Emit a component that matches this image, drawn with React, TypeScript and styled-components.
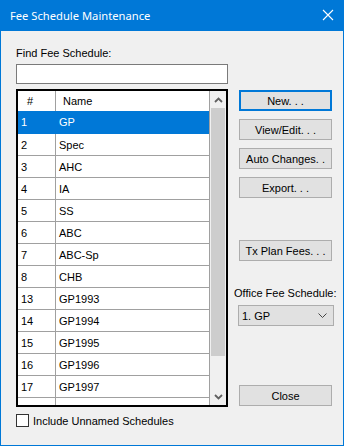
import React from "react";
import styled, { createGlobalStyle } from "styled-components";

const Global = createGlobalStyle`
  html, body { margin: 0; padding: 0; background: #f0f0f0; }
  body { font-family: "Liberation Sans", Arial, sans-serif; font-size: 11px; color: #000; }
  * { box-sizing: border-box; }
`;

const Window = styled.div`
  width: 344px;
  height: 446px;
  display: flex;
  flex-direction: column;
  border: 1px solid #0078d7;
  border-top: none;
  background: #f0f0f0;
  overflow: hidden;
`;

const TitleBar = styled.div`
  height: 31px;
  margin: 0 -1px;
  background: #0078d7;
  color: #fff;
  display: flex;
  align-items: center;
  justify-content: space-between;
  padding: 0 10px 1px 10px;
  font-family: "Noto Sans", "Open Sans", sans-serif;
  font-size: 11.2px;
`;

const CloseX = styled.svg`
  width: 12px;
  height: 12px;
`;

const Body = styled.div`
  flex: 1;
  display: flex;
  padding: 16px 0 0 15px;
`;

const LeftCol = styled.div`
  width: 212px;
  display: flex;
  flex-direction: column;
`;

const Label = styled.div`
  height: 13px;
  line-height: 13px;
  white-space: nowrap;
`;

const TextBox = styled.div`
  margin-top: 4px;
  height: 20px;
  background: #fff;
  border: 1px solid #7a7a7a;
`;

const ListBox = styled.div`
  margin-top: 5px;
  height: 318px;
  border: 2px solid #000;
  background: #fff;
  display: flex;
  overflow: hidden;
`;

const GridArea = styled.div`
  width: 192px;
  overflow: hidden;
  border-right: 1px solid #a0a0a0;
`;

const Row = styled.div<{ $selected?: boolean; $header?: boolean }>`
  display: grid;
  grid-template-columns: 38px 1fr;
  height: ${(p) => (p.$header ? 21 : 22)}px;
  background: ${(p) => (p.$selected ? "#0078d7" : "#fff")};
  color: ${(p) => (p.$selected ? "#fff" : "#000")};
  border-bottom: 1px solid ${(p) => (p.$selected ? "#0078d7" : "#a0a0a0")};
  ${(p) => (p.$selected ? "margin-top: -1px; height: 23px;" : "")}
`;

const Cell = styled.div<{ $selected?: boolean; $pad: number }>`
  display: flex;
  align-items: center;
  padding-left: ${(p) => p.$pad}px;
  white-space: nowrap;
  overflow: hidden;
  border-right: 1px solid ${(p) => (p.$selected ? "#0078d7" : "#a0a0a0")};
  &:last-child { border-right: none; }
`;

const ScrollBar = styled.div`
  width: 16px;
  display: flex;
  flex-direction: column;
  background: #f0f0f0;
`;

const ArrowBtn = styled.div`
  height: 17px;
  display: flex;
  align-items: center;
  justify-content: center;
`;

const Track = styled.div`
  flex: 1;
  display: flex;
  flex-direction: column;
`;

const Thumb = styled.div`
  height: 248px;
  margin: 0 1px;
  background: #cdcdcd;
`;

const CheckRow = styled.div`
  margin-top: 7px;
  display: flex;
  align-items: center;
  gap: 4px;
`;

const CheckBox = styled.div`
  width: 13px;
  height: 13px;
  border: 1px solid #333;
  background: #fff;
`;

const RightCol = styled.div`
  margin-left: 6px;
  width: 105px;
  display: flex;
  flex-direction: column;
  padding-top: 43px;
`;

const Button = styled.div<{ $default?: boolean; $mt: number }>`
  margin-top: ${(p) => p.$mt}px;
  margin-left: 5px;
  width: 93px;
  height: 21px;
  display: flex;
  align-items: center;
  justify-content: center;
  background: #e1e1e1;
  border: ${(p) => (p.$default ? "2px solid #0078d7" : "1px solid #adadad")};
  white-space: nowrap;
`;

const SideLabel = styled(Label)`
  margin-top: 26px;
`;

const Combo = styled.div`
  margin-top: 5px;
  margin-left: 4px;
  width: 96px;
  height: 21px;
  display: flex;
  align-items: center;
  justify-content: space-between;
  padding: 0 6px 0 3px;
  background: #e1e1e1;
  border: 1px solid #adadad;
`;

const rows: [string, string][] = [
  ["1", "GP"],
  ["2", "Spec"],
  ["3", "AHC"],
  ["4", "IA"],
  ["5", "SS"],
  ["6", "ABC"],
  ["7", "ABC-Sp"],
  ["8", "CHB"],
  ["13", "GP1993"],
  ["14", "GP1994"],
  ["15", "GP1995"],
  ["16", "GP1996"],
  ["17", "GP1997"],
  ["20", "No 2000"],
];

const Chevron = ({ up }: { up?: boolean }) => (
  <svg width="9" height="6" viewBox="0 0 9 6">
    <path
      d={up ? "M1 5 L4.5 1.5 L8 5" : "M1 1 L4.5 4.5 L8 1"}
      fill="none"
      stroke="#606060"
      strokeWidth="1.8"
    />
  </svg>
);

export default function App() {
  return (
    <>
      <Global />
      <Window>
        <TitleBar>
          <span>Fee Schedule Maintenance</span>
          <CloseX viewBox="0 0 12 12">
            <path d="M1 1 L11 11 M11 1 L1 11" stroke="#fff" strokeWidth="1.1" />
          </CloseX>
        </TitleBar>
        <Body>
          <LeftCol>
            <Label>Find Fee Schedule:</Label>
            <TextBox />
            <ListBox>
              <GridArea>
                <Row $header>
                  <Cell $pad={9}>#</Cell>
                  <Cell $pad={7}>Name</Cell>
                </Row>
                {rows.map(([n, name], i) => (
                  <Row key={n} $selected={i === 0}>
                    <Cell $pad={3} $selected={i === 0}>{n}</Cell>
                    <Cell $pad={3} $selected={i === 0}>{name}</Cell>
                  </Row>
                ))}
              </GridArea>
              <ScrollBar>
                <ArrowBtn>
                  <Chevron up />
                </ArrowBtn>
                <Track>
                  <Thumb />
                </Track>
                <ArrowBtn>
                  <Chevron />
                </ArrowBtn>
              </ScrollBar>
            </ListBox>
            <CheckRow>
              <CheckBox />
              <span>Include Unnamed Schedules</span>
            </CheckRow>
          </LeftCol>
          <RightCol>
            <Button $default $mt={0}>New. . .</Button>
            <Button $mt={8}>View/Edit. . .</Button>
            <Button $mt={8}>Auto Changes. .</Button>
            <Button $mt={8}>Export. . .</Button>
            <Button $mt={42}>Tx Plan Fees. . .</Button>
            <SideLabel>Office Fee Schedule:</SideLabel>
            <Combo>
              <span>1. GP</span>
              <svg width="9" height="5" viewBox="0 0 9 5">
                <path d="M0.5 0.5 L4.5 4.5 L8.5 0.5" fill="none" stroke="#444" strokeWidth="1" />
              </svg>
            </Combo>
            <Button $mt={59}>Close</Button>
          </RightCol>
        </Body>
      </Window>
    </>
  );
}
